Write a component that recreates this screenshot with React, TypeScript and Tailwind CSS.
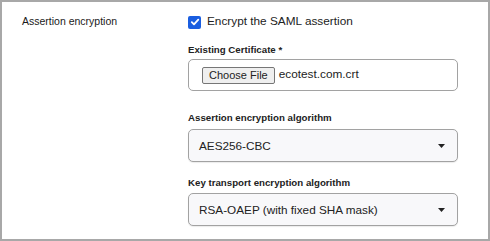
import React from 'react';

const Caret: React.FC = () => (
  <svg width="7" height="4" viewBox="0 0 7 4" className="text-[#222]">
    <path d="M0 0h7L3.5 4z" fill="currentColor" />
  </svg>
);

const SelectBox: React.FC<{ value: string }> = ({ value }) => (
  <div className="h-[33px] w-[270px] rounded-[5px] border border-[#a2a2a2] bg-[#f8f8fa] shadow-[0_1px_1px_rgba(0,0,0,0.08)] flex items-center justify-between pl-[10px] pr-[12px]">
    <span className="text-[11.75px] text-[#222]">{value}</span>
    <Caret />
  </div>
);

const App: React.FC = () => {
  return (
    <div className="w-[490px] h-[241px] bg-white border-2 border-[#a8a8a8] font-['Liberation_Sans',Arial,sans-serif] text-[#222] overflow-hidden">
      <div className="flex pt-[10px]">
        {/* left label */}
        <div className="w-[186px] pl-[20px] h-[20px] flex items-center">
          <span className="text-[10.5px] text-[#1a1a1a]">Assertion encryption</span>
        </div>

        {/* right column */}
        <div className="flex flex-col w-[270px]">
          <label className="h-[20px] flex items-center gap-[6px]">
            <span className="w-[13px] h-[13px] rounded-[2px] bg-[#1a5ee0] flex items-center justify-center">
              <svg width="10" height="10" viewBox="0 0 10 10">
                <path d="M1.8 5.2l2.2 2.2 4.3-4.8" stroke="white" strokeWidth="1.8" fill="none" strokeLinecap="round" strokeLinejoin="round" />
              </svg>
            </span>
            <span className="text-[11.8px]">Encrypt the SAML assertion</span>
          </label>

          <div className="mt-[11px] h-[14px] flex items-center text-[9.7px] font-bold">Existing Certificate *</div>
          <div className="mt-[2px] h-[32px] rounded-[5px] border border-[#a2a2a2] bg-white flex items-center pl-[13px] gap-[4px]">
            <span className="h-[17px] px-[6px] flex items-center rounded-[2px] border border-[#767676] bg-[#efefef] text-[11px]">Choose File</span>
            <span className="text-[11.8px]">ecotest.com.crt</span>
          </div>

          <div className="mt-[20px] h-[14px] flex items-center text-[9.7px] font-bold">Assertion encryption algorithm</div>
          <div className="mt-[4px]">
            <SelectBox value="AES256-CBC" />
          </div>

          <div className="mt-[14px] h-[14px] flex items-center text-[9.7px] font-bold">Key transport encryption algorithm</div>
          <div className="mt-[3px]">
            <SelectBox value="RSA-OAEP (with fixed SHA mask)" />
          </div>
        </div>
      </div>
    </div>
  );
};

export default App;
